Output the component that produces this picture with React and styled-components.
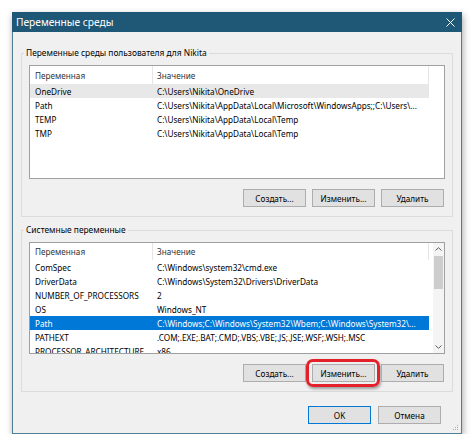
import styled, { createGlobalStyle } from "styled-components";

const GlobalStyle = createGlobalStyle`
  html, body {
    margin: 0;
    background: #ffffff;
  }
  body {
    font-family: "Noto Sans", "Open Sans", sans-serif;
    font-size: 8.2px;
    color: #000;
  }
`;

const userVars = [
  { name: "OneDrive", value: "C:\\Users\\Nikita\\OneDrive", state: "inactive" },
  {
    name: "Path",
    value: "C:\\Users\\Nikita\\AppData\\Local\\Microsoft\\WindowsApps;;C:\\Users\\...",
  },
  { name: "TEMP", value: "C:\\Users\\Nikita\\AppData\\Local\\Temp" },
  { name: "TMP", value: "C:\\Users\\Nikita\\AppData\\Local\\Temp" },
];

const systemVars = [
  { name: "ComSpec", value: "C:\\Windows\\system32\\cmd.exe" },
  { name: "DriverData", value: "C:\\Windows\\System32\\Drivers\\DriverData" },
  { name: "NUMBER_OF_PROCESSORS", value: "2" },
  { name: "OS", value: "Windows_NT" },
  {
    name: "Path",
    value: "C:\\Windows;C:\\Windows\\System32\\Wbem;C:\\Windows\\System32\\...",
    state: "active",
  },
  { name: "PATHEXT", value: ".COM;.EXE;.BAT;.CMD;.VBS;.VBE;.JS;.JSE;.WSF;.WSH;.MSC" },
  { name: "PROCESSOR_ARCHITECTURE", value: "x86" },
];

const VarList = ({ rows, height, headHeight, scroll }) => (
  <ListBox $height={height}>
    <Table>
      <HeaderRow $height={headHeight}>
        <HeadCell>Переменная</HeadCell>
        <HeadCell>Значение</HeadCell>
      </HeaderRow>
      {rows.map((r) => (
        <Row key={r.name} $state={r.state}>
          <Cell>{r.name}</Cell>
          <Cell>{r.value}</Cell>
        </Row>
      ))}
    </Table>
    {scroll && (
      <ScrollBar>
        <ScrollArrow>
          <svg width="7" height="4" viewBox="0 0 7 4">
            <path d="M0.5 3.5 L3.5 0.7 L6.5 3.5" fill="none" stroke="#606060" strokeWidth="1" />
          </svg>
        </ScrollArrow>
        <Track>
          <Thumb />
        </Track>
        <ScrollArrow>
          <svg width="7" height="4" viewBox="0 0 7 4">
            <path d="M0.5 0.5 L3.5 3.3 L6.5 0.5" fill="none" stroke="#606060" strokeWidth="1" />
          </svg>
        </ScrollArrow>
      </ScrollBar>
    )}
  </ListBox>
);

const App = () => {
  return (
    <>
      <GlobalStyle />
      <Window>
        <TitleBar>
          <span>Переменные среды</span>
          <svg width="9" height="9" viewBox="0 0 9 9">
            <path d="M0.5 0.5 L8.5 8.5 M8.5 0.5 L0.5 8.5" stroke="#ffffff" strokeWidth="1" />
          </svg>
        </TitleBar>
        <Body>
          <Group>
            <Legend>Переменные среды пользователя для Nikita</Legend>
            <VarList rows={userVars} height={114} headHeight={18} />
            <ButtonRow>
              <Button>Создать...</Button>
              <Button>Изменить...</Button>
              <Button>Удалить</Button>
            </ButtonRow>
          </Group>
          <Group $second>
            <Legend>Системные переменные</Legend>
            <VarList rows={systemVars} height={112} headHeight={17} scroll />
            <ButtonRow>
              <Button>Создать...</Button>
              <Button $highlight>Изменить...</Button>
              <Button>Удалить</Button>
            </ButtonRow>
          </Group>
          <Footer>
            <Button $default>OK</Button>
            <Button>Отмена</Button>
          </Footer>
          <Grip width="6" height="6" viewBox="0 0 6 6">
            <rect x="4" y="0" width="1" height="1" fill="#b0b0b0" />
            <rect x="2" y="2" width="1" height="1" fill="#b0b0b0" />
            <rect x="4" y="2" width="1" height="1" fill="#b0b0b0" />
            <rect x="0" y="4" width="1" height="1" fill="#b0b0b0" />
            <rect x="2" y="4" width="1" height="1" fill="#b0b0b0" />
            <rect x="4" y="4" width="1" height="1" fill="#b0b0b0" />
          </Grip>
        </Body>
      </Window>
    </>
  );
};

const Window = styled.div`
  width: 450px;
  height: 422px;
  margin: 12px 0 0 12px;
  display: flex;
  flex-direction: column;
  box-shadow: 1px 3px 7px rgba(0, 0, 0, 0.35);
`;

const TitleBar = styled.div`
  height: 20px;
  flex-shrink: 0;
  background: #1f5876;
  color: #ffffff;
  font-size: 10.2px;
  display: flex;
  align-items: center;
  justify-content: space-between;
  padding: 0 7px 0 4px;
`;

const Body = styled.div`
  position: relative;
  flex: 1;
  background: #f0f0f0;
  border: 1px solid #4f7f97;
  border-top: none;
  padding: 13px 8px 0;
  display: flex;
  flex-direction: column;
`;

const Group = styled.fieldset`
  margin: ${(p) => (p.$second ? "5px" : "0")} 0 0;
  padding: 4px 7px 9px;
  border: 1px solid #dcdcdc;
  min-width: 0;
`;

const Legend = styled.legend`
  margin-left: -5px;
  padding: 0 2px;
  font-size: 8.4px;
  line-height: 16px;
  height: 16px;
`;

const ListBox = styled.div`
  height: ${(p) => p.$height}px;
  box-sizing: border-box;
  border: 1px solid #a0a0a0;
  background: #ffffff;
  display: flex;
  overflow: hidden;
`;

const Table = styled.div`
  flex: 1;
  min-width: 0;
`;

const HeaderRow = styled.div`
  display: grid;
  grid-template-columns: 123px 276px;
  height: ${(p) => p.$height}px;
  align-items: stretch;
  color: #333;
`;

const HeadCell = styled.div`
  display: flex;
  align-items: center;
  padding-left: 5px;
  border-right: 1px solid #e5e5e5;
  &:nth-child(2) {
    padding-left: 4px;
  }
`;

const Row = styled.div`
  display: grid;
  grid-template-columns: 123px 276px;
  width: 399px;
  height: 14px;
  align-items: center;
  background: ${(p) =>
    p.$state === "active" ? "#0078d7" : p.$state === "inactive" ? "#e8e8e8" : "transparent"};
  color: ${(p) => (p.$state === "active" ? "#ffffff" : "#000000")};
`;

const Cell = styled.div`
  padding-left: 5px;
  white-space: nowrap;
  overflow: hidden;
  &:nth-child(2) {
    padding-left: 4px;
  }
`;

const ScrollBar = styled.div`
  width: 11px;
  flex-shrink: 0;
  background: #f4f4f4;
  display: flex;
  flex-direction: column;
`;

const ScrollArrow = styled.div`
  height: 12px;
  display: flex;
  align-items: center;
  justify-content: center;
`;

const Track = styled.div`
  flex: 1;
  padding: 1px 1px 0 1px;
`;

const Thumb = styled.div`
  height: 33px;
  background: #cdcdcd;
`;

const ButtonRow = styled.div`
  display: flex;
  justify-content: flex-end;
  gap: 6px;
  margin-top: 10px;
  padding-right: 1px;
`;

const Footer = styled.div`
  display: flex;
  justify-content: flex-end;
  gap: 7px;
  margin: 14px 12px 0 0;
`;

const Button = styled.button`
  position: relative;
  width: 63px;
  height: 18px;
  padding: 0;
  font-family: inherit;
  font-size: 8.2px;
  color: #000;
  background: #e1e1e1;
  border: 1px solid ${(p) => (p.$default ? "#0078d7" : "#adadad")};
  border-radius: 0;
  ${(p) =>
    p.$highlight &&
    `
    &::after {
      content: "";
      position: absolute;
      inset: -6px -6px -6px -7px;
      border: 3px solid #e3212a;
      border-radius: 7px;
      box-shadow: 1px 2px 3px rgba(0, 0, 0, 0.35);
    }
  `}
`;

const Grip = styled.svg`
  position: absolute;
  right: 2px;
  bottom: 2px;
`;

export default App;
